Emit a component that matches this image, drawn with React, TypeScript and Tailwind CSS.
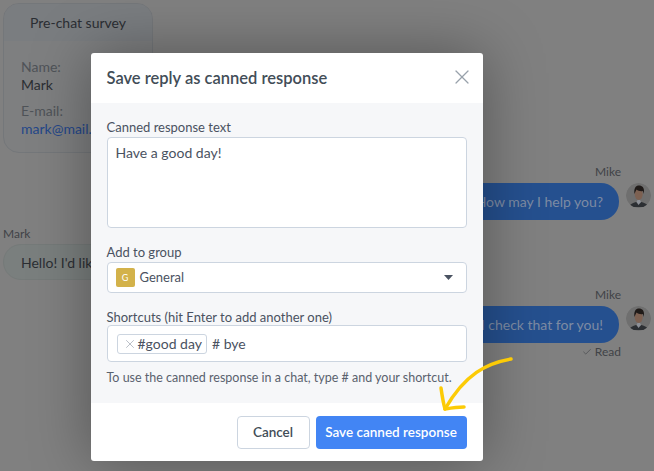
import React from 'react';
import { X, Check } from 'lucide-react';

function Avatar() {
    return (
        <svg width="25" height="25" viewBox="0 0 25 25" className="shrink-0 rounded-full">
            <circle cx="12.5" cy="12.5" r="12.5" fill="#6f6f6f" />
            <path d="M3 24c1-3 4-4 7-5l2.500 1 3-1c3 1 6 2 7 5z" fill="#2c2f33" />
            <path d="M10.500 19l2 3 2.500-3-1-2h-2.500z" fill="#8d9097" />
            <ellipse cx="12.700" cy="11" rx="4" ry="6" fill="#7d6152" />
            <path d="M8.500 11C7.500 5 10 2.500 13 2.500s6 2 4.800 8.500l-.8-3c-2 .5-5 0-6.500-1.500C10 8 9.200 9 8.500 11z" fill="#1f1a18" />
        </svg>
    );
}

function Survey() {
    return (
        <div className="w-[150px] h-[150px] rounded-2xl border border-[#74777a] bg-[#7e7f80] overflow-hidden">
            <div className="h-[37px] bg-[#7a7d80] flex items-center justify-center text-[14px] text-[#2b2e33]">Pre-chat survey</div>
            <div className="px-[17px] pt-[17px] text-[14px] leading-[18px]">
                <div className="text-[#4f5358]">Name:</div>
                <div className="text-[#2b2e33]">Mark</div>
                <div className="text-[#4f5358] mt-[8px]">E-mail:</div>
                <div className="text-[#24478a] whitespace-nowrap">mark@mail.com</div>
            </div>
        </div>
    );
}

function AgentMessage({ text, read }: { text: string; read?: boolean }) {
    return (
        <div className="flex flex-col items-end pr-[3px]">
            <div className="text-[12px] leading-[14px] text-[#404347] pr-[30px]">Mike</div>
            <div className="flex items-start gap-[7px] mt-[4px]">
                <div className="h-[36.500px] w-[250px] rounded-[18px] bg-[#25508f] flex items-center justify-end pr-[16px] text-[14px] text-[#7d8ba3] whitespace-nowrap overflow-hidden">
                    {text}
                </div>
                <Avatar />
            </div>
            {read && (
                <div className="flex items-center gap-[3px] pr-[30px] mt-[2px] text-[12px] leading-[14px] text-[#404347]">
                    <Check size={10} strokeWidth={1.500} />
                    <span>Read</span>
                </div>
            )}
        </div>
    );
}

function Label({ children }: { children: React.ReactNode }) {
    return <div className="text-[13px] leading-[16px] text-[#4a5261]">{children}</div>;
}

export default function App() {
    return (
        <div className="relative w-[654px] h-[471px] overflow-hidden bg-[#808080] font-['Lato',sans-serif]">
            <div className="pt-[3px] pl-[3px]">
                <Survey />
            </div>

            <div className="absolute inset-x-0 top-[165px]">
                <AgentMessage text="Hello. How may I help you?" />
            </div>
            <div className="absolute left-[3px] top-[227px]">
                <div className="text-[12px] leading-[14px] text-[#404347]">Mark</div>
                <div className="mt-[3px] h-[36px] w-[200px] rounded-[18px] border border-[#757a79] bg-[#7a7f7e] flex items-center pl-[17px] text-[14px] text-[#2b2e33]">Hello! I'd like to ask</div>
            </div>
            <div className="absolute inset-x-0 top-[288px]">
                <AgentMessage text="Yes, I'll check that for you!" read />
            </div>

            <div className="absolute left-[90.500px] top-[53px] w-[392px] h-[408px] rounded-[3px] overflow-hidden bg-white flex flex-col shadow-[0_0_60px_rgba(0,0,0,0.35)]">
                <div className="h-[50px] shrink-0 flex items-center justify-between pl-[16px] pr-[9px]">
                    <div className="text-[16.500px] font-semibold text-[#424d57]">Save reply as canned response</div>
                    <X size={24} strokeWidth={1.200} className="text-[#98a1ab] -mt-[2px]" />
                </div>

                <div className="h-[300px] shrink-0 bg-[#f6f7f9] px-[16px] pt-[16px]">
                    <Label>Canned response text</Label>
                    <div className="mt-[2px] h-[91px] rounded-[4px] border border-[#ccd5e0] bg-white px-[8px] py-[3px] text-[14px] leading-[24px] text-[#4a5261]">Have a good day!</div>

                    <div className="mt-[16px]"><Label>Add to group</Label></div>
                    <div className="mt-[2px] h-[31px] rounded-[4px] border border-[#ccd5e0] bg-white flex items-center pl-[8px] pr-[13px]">
                        <div className="w-[19px] h-[19px] rounded-[2px] bg-[#d3b24a] flex items-center justify-center text-[9px] text-white">G</div>
                        <div className="ml-[5px] text-[13px] text-[#4a5261]">General</div>
                        <svg width="9" height="5" viewBox="0 0 9 5" className="ml-auto"><path d="M0 0h9L4.500 5z" fill="#4a5261" /></svg>
                    </div>

                    <div className="mt-[16px]"><Label>Shortcuts (hit Enter to add another one)</Label></div>
                    <div className="mt-[0px] h-[37px] rounded-[4px] border border-[#ccd5e0] bg-white flex items-center pl-[9px]">
                        <div className="h-[20px] rounded-[3px] border border-[#ccd5e0] flex items-center pl-[5px] pr-[4px] gap-[1px] text-[14px] text-[#4a5261]">
                            <X size={14} strokeWidth={1} className="text-[#8a93a0]" />
                            <span>#good day</span>
                        </div>
                        <div className="ml-[5px] text-[14px] text-[#4a5261]"># bye</div>
                    </div>

                    <div className="mt-[8px] text-[12.500px] leading-[16px] text-[#5a626e]">To use the canned response in a chat, type # and your shortcut.</div>
                </div>

                <div className="flex-1 flex items-start justify-end gap-[6px] pr-[16px] pt-[13px]">
                    <div className="w-[73px] h-[33px] rounded-[4px] border border-[#ccd5e0] bg-white flex items-center justify-center text-[13.500px] font-semibold text-[#424d57]">Cancel</div>
                    <div className="w-[151px] h-[33px] rounded-[4px] bg-[#4285f4] flex items-center justify-center text-[13.500px] font-semibold text-white">Save canned response</div>
                </div>
            </div>

            <svg width="80" height="65" viewBox="0 0 80 65" className="absolute left-[437px] top-[352px]" fill="none" stroke="#fccb06" strokeWidth="3.500" strokeLinecap="round" strokeLinejoin="round">
                <path d="M74 7C50 11 28 22 8 57" />
                <path d="M4 36c1 7 2 14 4 21 6-1 12-2 19-2" />
            </svg>
        </div>
    );
}
